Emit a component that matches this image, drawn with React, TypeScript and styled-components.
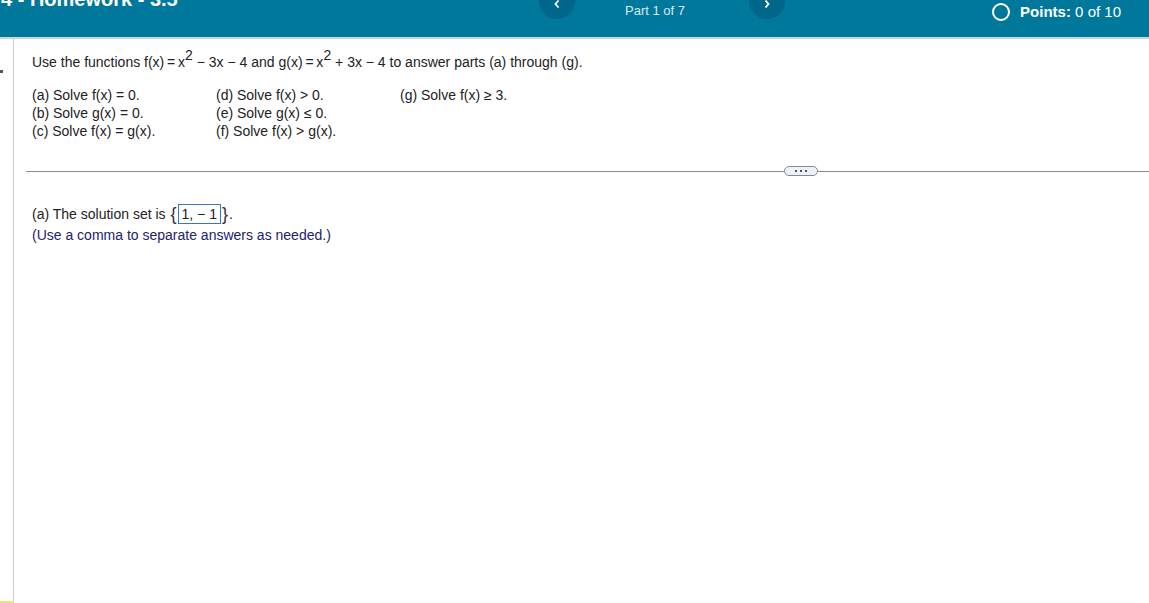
import React from 'react';
import styled, { createGlobalStyle } from 'styled-components';

const GlobalStyle = createGlobalStyle`
  html, body {
    margin: 0;
    padding: 0;
    background: #ffffff;
    overflow: hidden;
  }
  body {
    font-family: Arial, "Liberation Sans", sans-serif;
    color: #222222;
  }
`;

const Page = styled.div`
  display: flex;
  flex-direction: column;
  height: 100vh;
`;

const Header = styled.header`
  display: flex;
  align-items: flex-start;
  height: 37px;
  background: #00789b;
  border-bottom: 2px solid #c9d4dc;
  overflow: hidden;
  color: #ffffff;
`;

const Title = styled.div`
  width: 538px;
  flex: none;
  margin-top: -11px;
  padding-left: 1px;
  font-size: 20px;
  line-height: 20px;
  font-weight: bold;
  white-space: nowrap;
`;

const Nav = styled.div`
  display: flex;
  align-items: flex-start;
`;

const NavButton = styled.div`
  width: 36px;
  height: 36px;
  margin-top: -17px;
  border-radius: 50%;
  background: #00668a;
  display: flex;
  align-items: center;
  justify-content: center;
  padding-top: 6px;
  box-sizing: border-box;
`;

const PartLabel = styled.div`
  margin: 3px 64px 0 50px;
  font-size: 13px;
  line-height: 16px;
  color: #d6ebf2;
  white-space: nowrap;
`;

const Points = styled.div`
  margin-left: auto;
  margin-right: 28px;
  margin-top: 2px;
  display: flex;
  align-items: center;
  gap: 10px;
  font-size: 15px;
  line-height: 20px;
  white-space: nowrap;
`;

const Ring = styled.span`
  width: 14px;
  height: 14px;
  border: 2.5px solid #ffffff;
  border-radius: 50%;
`;

const Main = styled.div`
  flex: 1;
  display: flex;
`;

const Gutter = styled.div`
  width: 14px;
  flex: none;
  border-right: 1px solid #c6d0dc;
  border-bottom: 2px solid #f3e27c;
  box-sizing: border-box;
  padding-top: 31px;
`;

const Marker = styled.div`
  width: 3px;
  height: 3px;
  background: #555555;
`;

const Content = styled.div`
  flex: 1;
  padding: 15px 0 0 12px;
  font-size: 14px;
  line-height: 16px;
`;

const Block = styled.div`
  padding-left: 6px;
`;

const Intro = styled.p`
  margin: 0;
  white-space: nowrap;
`;

const Sup = styled.sup`
  font-size: 14px;
  vertical-align: 7px;
  line-height: 0;
`;

const Parts = styled.div`
  display: grid;
  grid-template-columns: 184px 184px 184px;
  grid-template-rows: repeat(3, 18px);
  grid-auto-flow: column;
  margin-top: 16px;
  line-height: 18px;
  white-space: nowrap;
`;

const Divider = styled.div`
  display: flex;
  align-items: center;
  margin-top: 26px;
`;

const Rule = styled.div<{ $width?: number }>`
  height: 1px;
  background: #868f99;
  ${({ $width }) => ($width ? `width: ${$width}px; flex: none;` : 'flex: 1;')}
`;

const Pill = styled.div`
  width: 34px;
  height: 10px;
  box-sizing: border-box;
  border: 1px solid #7d8a96;
  border-radius: 6px;
  background: #eef1f5;
  display: flex;
  align-items: center;
  justify-content: center;
  gap: 3px;
`;

const Dot = styled.span`
  width: 2px;
  height: 2px;
  background: #4a5560;
`;

const Answer = styled.div`
  margin-top: 27px;
  display: flex;
  align-items: center;
  white-space: nowrap;
  height: 22px;
`;

const Brace = styled.span`
  font-size: 18px;
  line-height: 22px;
  font-weight: 300;
  color: #333333;
  margin: 0 1px;
`;

const AnswerBox = styled.span`
  display: inline-block;
  border: 1px solid #3a72c6;
  padding: 0 3px;
  height: 20px;
  line-height: 18px;
  box-sizing: border-box;
`;

const Hint = styled.p`
  margin: 0;
  color: #22226e;
  line-height: 20px;
`;

const Chevron: React.FC<{ dir: 'left' | 'right' }> = ({ dir }) => (
  <svg width="6" height="8" viewBox="0 0 6 8">
    <path
      d={dir === 'left' ? 'M4.5 0.5 L1.5 4 L4.5 7.5' : 'M1.5 0.5 L4.5 4 L1.5 7.5'}
      stroke="#ffffff"
      strokeWidth="1.8"
      fill="none"
    />
  </svg>
);

const partItems = [
  '(a) Solve f(x) = 0.',
  '(b) Solve g(x) = 0.',
  '(c) Solve f(x) = g(x).',
  '(d) Solve f(x) > 0.',
  '(e) Solve g(x) ≤ 0.',
  '(f) Solve f(x) > g(x).',
  '(g) Solve f(x) ≥ 3.',
];

const App: React.FC = () => (
  <>
    <GlobalStyle />
    <Page>
      <Header>
        <Title>4 - Homework - 3.5</Title>
        <Nav>
          <NavButton>
            <Chevron dir="left" />
          </NavButton>
          <PartLabel>Part 1 of 7</PartLabel>
          <NavButton>
            <Chevron dir="right" />
          </NavButton>
        </Nav>
        <Points>
          <Ring />
          <span>
            <b>Points:</b> 0 of 10
          </span>
        </Points>
      </Header>
      <Main>
        <Gutter>
          <Marker />
        </Gutter>
        <Content>
          <Block>
            <Intro>
              Use the functions f(x)&#8201;=&#8201;x<Sup>2</Sup> &#8722; 3x &#8722; 4 and
              g(x)&#8201;=&#8201;x<Sup>2</Sup> + 3x &#8722; 4 to answer parts (a) through (g).
            </Intro>
            <Parts>
              {partItems.map((p) => (
                <div key={p}>{p}</div>
              ))}
            </Parts>
          </Block>
          <Divider>
            <Rule $width={758} />
            <Pill>
              <Dot />
              <Dot />
              <Dot />
            </Pill>
            <Rule />
          </Divider>
          <Block>
            <Answer>
              (a) The solution set is&nbsp;
              <Brace>{'{'}</Brace>
              <AnswerBox>1, &#8722; 1</AnswerBox>
              <Brace>{'}'}</Brace>.
            </Answer>
            <Hint>(Use a comma to separate answers as needed.)</Hint>
          </Block>
        </Content>
      </Main>
    </Page>
  </>
);

export default App;
